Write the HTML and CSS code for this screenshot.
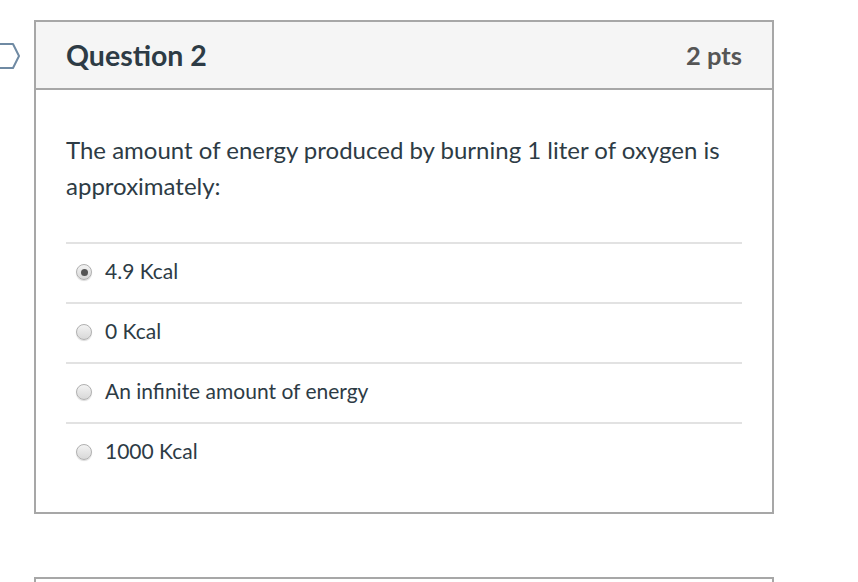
FILE: index.html
```html
<!DOCTYPE html>
<html>
<head>
<meta charset="utf-8">
<link rel="stylesheet" href="styles.css">
</head>
<body>
<svg class="flag" width="24" height="32" viewBox="0 0 24 32" aria-hidden="true">
  <path d="M-4 4 H13 L19 16 L13 28 H-4" fill="none" stroke="#6f8aa3" stroke-width="2" stroke-linejoin="round"/>
</svg>
<div class="page">
  <div class="card">
    <div class="card-header">
      <span class="title">Question 2</span>
      <span class="pts">2 pts</span>
    </div>
    <div class="card-body">
      <p class="question">The amount of energy produced by burning 1 liter of oxygen is approximately:</p>
      <div class="answers">
        <label class="answer"><span class="radio checked"></span><span>4.9 Kcal</span></label>
        <label class="answer"><span class="radio"></span><span>0 Kcal</span></label>
        <label class="answer"><span class="radio"></span><span>An infinite amount of energy</span></label>
        <label class="answer"><span class="radio"></span><span>1000 Kcal</span></label>
      </div>
    </div>
  </div>
  <div class="card next"></div>
</div>
</body>
</html>
```

FILE: styles.css
```css
html, body {
  margin: 0;
  padding: 0;
  background: #fff;
  font-family: Lato, "Open Sans", sans-serif;
  color: #2d3b45;
  overflow: hidden;
}
.flag {
  position: absolute;
  left: 0;
  top: 40px;
}
.page {
  padding: 20px 0 0 34px;
  width: 740px;
}
.card {
  border: 2px solid #a7a7a7;
  background: #fff;
}
.card-header {
  background: #f5f5f5;
  height: 66px;
  border-bottom: 2px solid #a7a7a7;
  display: flex;
  align-items: center;
  justify-content: space-between;
  padding: 0 30px;
}
.title {
  font-size: 28.5px;
  font-weight: 700;
  color: #2d3b45;
}
.pts {
  font-size: 25.5px;
  font-weight: 700;
  color: #555;
}
.card-body {
  padding: 42px 30px 30px;
}
.question {
  margin: 0 0 38px;
  font-size: 24px;
  line-height: 36px;
}
.answer {
  display: flex;
  align-items: center;
  height: 58px;
  box-sizing: content-box;
  border-top: 2px solid #e2e2e2;
  font-size: 21px;
  padding-left: 10px;
  gap: 13px;
}
.answer > span:last-child {
  position: relative;
  top: -3px;
}
.radio {
  width: 16px;
  height: 16px;
  border-radius: 50%;
  box-sizing: border-box;
  border: 1px solid #b0b0b0;
  background: linear-gradient(#f3f3f3, #d8d8d8);
  box-shadow: 0 1px 1px rgba(0,0,0,0.15);
  position: relative;
  top: -1px;
  flex: none;
}
.radio.checked::after {
  content: "";
  position: absolute;
  left: 3.5px;
  top: 3.5px;
  width: 7px;
  height: 7px;
  border-radius: 50%;
  background: #555;
}
.next {
  margin-top: 63px;
  height: 40px;
}
```
